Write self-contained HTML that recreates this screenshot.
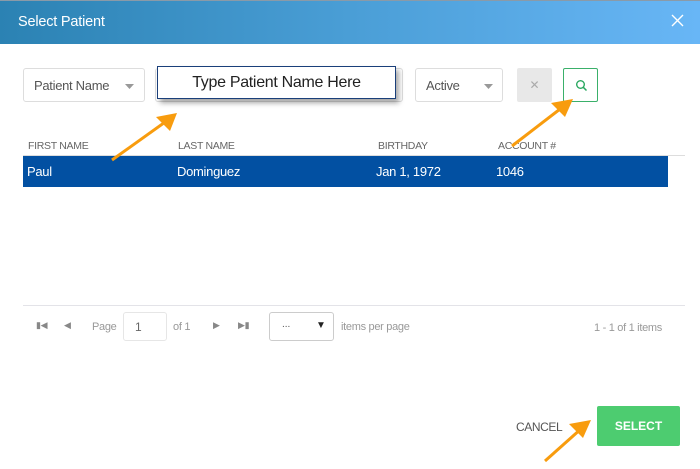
<!DOCTYPE html><html><head><style>
body{margin:0;width:700px;height:469px;background:#fff;font-family:"Liberation Sans",sans-serif;position:relative;overflow:hidden}
.a{position:absolute}
.hd{left:0;top:0;width:700px;height:44px;background:linear-gradient(90deg,#2b82b3,#4a9ed6 50%,#68b6f6);border-top:1px solid #8a9aa8;box-sizing:border-box}
.box{border:1px solid #ddd;border-radius:3px;box-sizing:border-box;font-size:13px;color:#555}
.th{font-size:10.5px;color:#666;top:140px;letter-spacing:-0.3px}
.td{font-size:13px;color:#fff;top:164px;letter-spacing:-0.3px}
.pg{font-size:11px;color:#999;letter-spacing:-0.3px}
</style></head><body>
<div class="a hd"><div class="a" style="left:18px;top:13px;color:#fff;font-size:14.5px;letter-spacing:-0.2px">Select Patient</div>
<svg class="a" style="left:671px;top:13px" width="13" height="13"><path d="M1 1L12 12M12 1L1 12" stroke="#fff" stroke-width="1.4"/></svg></div>
<div class="a box" style="left:23px;top:68px;width:122px;height:34px"><span class="a" style="left:10px;top:9px;letter-spacing:-0.3px">Patient Name</span><svg class="a" style="left:101px;top:15px" width="9" height="5"><path d="M0 0H9L4.5 5Z" fill="#999"/></svg></div>
<div class="a box" style="left:155px;top:68px;width:248px;height:34px"></div>
<div class="a" style="left:157px;top:66px;width:239px;height:33px;border:1px solid #1a3f7a;background:#fff;box-sizing:border-box;box-shadow:3px 4px 5px rgba(0,0,0,.35);font-size:16px;color:#222;text-align:center;line-height:31px;letter-spacing:-0.3px">Type Patient Name Here</div>
<div class="a box" style="left:415px;top:68px;width:88px;height:34px"><span class="a" style="left:10px;top:9px;letter-spacing:-0.3px">Active</span><svg class="a" style="left:68px;top:15px" width="9" height="5"><path d="M0 0H9L4.5 5Z" fill="#999"/></svg></div>
<div class="a" style="left:517px;top:68px;width:35px;height:34px;background:#e8e8e8;border-radius:2px;color:#aaa;font-size:12px;text-align:center;line-height:34px">✕</div>
<div class="a" style="left:563px;top:68px;width:35px;height:34px;border:1px solid #3ab06a;box-sizing:border-box;border-radius:2px">
<svg class="a" style="left:11px;top:10px" width="13" height="13"><circle cx="5.5" cy="5.5" r="3.8" fill="none" stroke="#2aa860" stroke-width="1.4"/><path d="M8.3 8.3L11.5 11.5" stroke="#2aa860" stroke-width="1.5"/></svg></div>
<div class="a th" style="left:28px">FIRST NAME</div><div class="a th" style="left:178px">LAST NAME</div><div class="a th" style="left:378px">BIRTHDAY</div><div class="a th" style="left:498px">ACCOUNT #</div>
<div class="a" style="left:23px;top:155px;width:662px;height:1px;background:#ddd"></div>
<div class="a" style="left:23px;top:156px;width:645px;height:31px;background:#0250a2"></div>
<div class="a td" style="left:27px">Paul</div><div class="a td" style="left:177px">Dominguez</div><div class="a td" style="left:376px">Jan 1, 1972</div><div class="a td" style="left:496px">1046</div>
<div class="a" style="left:23px;top:305px;width:662px;height:1px;background:#e3e3e8"></div>
<div class="a pg" style="left:36px;top:320px;font-size:9px;color:#888">▮◀</div>
<div class="a pg" style="left:64px;top:320px;font-size:9px;color:#888">◀</div>
<div class="a pg" style="left:92px;top:321px">Page</div>
<div class="a box" style="left:123px;top:312px;width:44px;height:29px;border-color:#e6e6e6"><span class="a" style="left:11px;top:7px;font-size:12px;color:#666">1</span></div>
<div class="a pg" style="left:173px;top:321px">of 1</div>
<div class="a pg" style="left:213px;top:320px;font-size:9px;color:#888">▶</div>
<div class="a pg" style="left:238px;top:320px;font-size:9px;color:#888">▶▮</div>
<div class="a box" style="left:269px;top:312px;width:65px;height:29px;border-color:#ccc"><span class="a" style="left:12px;top:6px;font-size:10px">...</span><span class="a" style="left:46px;top:7px;font-size:10px;color:#222">▼</span></div>
<div class="a pg" style="left:341px;top:321px">items per page</div>
<div class="a pg" style="left:594px;top:322px">1 - 1 of 1 items</div>
<div class="a" style="left:516px;top:420px;font-size:12px;color:#555;letter-spacing:-0.4px">CANCEL</div>
<div class="a" style="left:597px;top:406px;width:83px;height:40px;background:#4dcc70;border-radius:2px;color:#fff;font-size:12px;font-weight:bold;text-align:center;line-height:40px">SELECT</div>
<svg class="a" style="left:0;top:0" width="700" height="469">
<g stroke="#f89c0e" stroke-width="3" fill="#f89c0e">
<line x1="112" y1="160" x2="168" y2="120"/><polygon points="177,113 156,117 170,131" stroke="none"/>
<line x1="512" y1="146" x2="564" y2="106"/><polygon points="573,99 551,103 565,117" stroke="none"/>
<line x1="545" y1="461" x2="582" y2="428"/><polygon points="591,420 569,424 583,438" stroke="none"/>
</g></svg>
</body></html>
